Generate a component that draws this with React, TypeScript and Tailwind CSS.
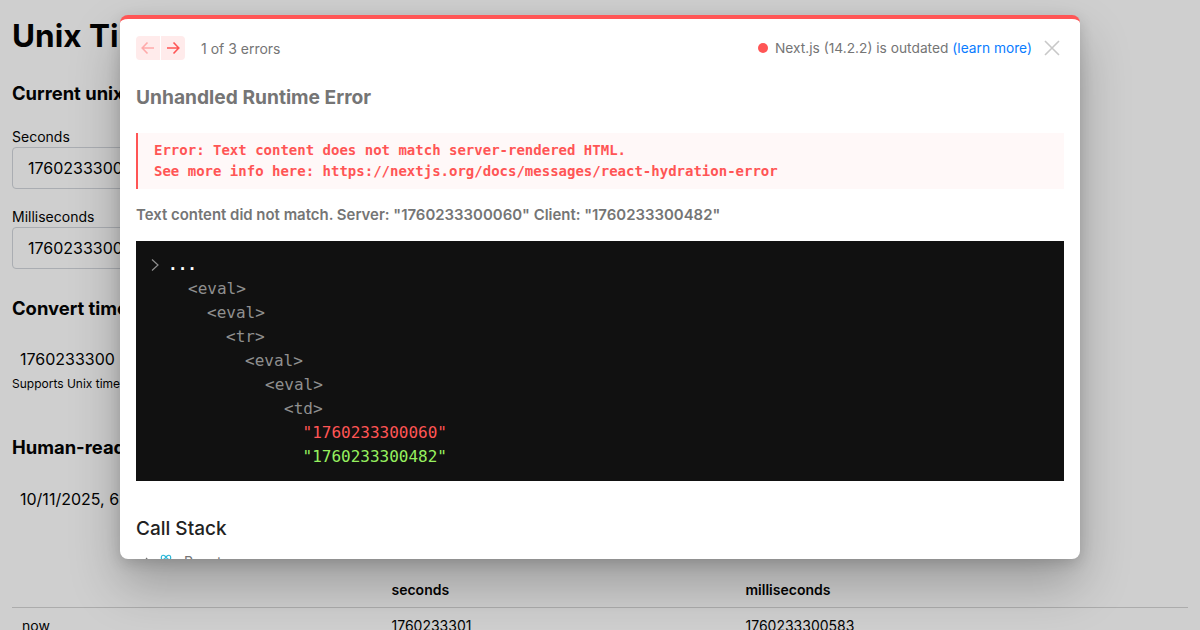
const sans = "font-['Inter',sans-serif]";
const mono = "font-['DejaVu_Sans_Mono','Liberation_Mono',monospace]";

const treeLines = [
  { text: "<eval>", indent: "pl-[52px]", color: "text-[#8f8f8f]" },
  { text: "<eval>", indent: "pl-[71px]", color: "text-[#8f8f8f]" },
  { text: "<tr>", indent: "pl-[90px]", color: "text-[#8f8f8f]" },
  { text: "<eval>", indent: "pl-[109px]", color: "text-[#8f8f8f]" },
  { text: "<eval>", indent: "pl-[129px]", color: "text-[#8f8f8f]" },
  { text: "<td>", indent: "pl-[148px]", color: "text-[#8f8f8f]" },
  { text: '"1760233300060"', indent: "pl-[166.5px]", color: "text-[#ff5555]" },
  { text: '"1760233300482"', indent: "pl-[166.5px]", color: "text-[#96f05f]" },
];

function ArrowLeft({ className }: { className: string }) {
  return (
    <svg viewBox="0 0 14 14" width="14" height="14" fill="none" className={className}>
      <path d="M6.5 1.5 1.2 7l5.3 5.5M1.5 7h11.5" stroke="currentColor" strokeWidth="1.6" />
    </svg>
  );
}

function ArrowRight({ className }: { className: string }) {
  return (
    <svg viewBox="0 0 14 14" width="14" height="14" fill="none" className={className}>
      <path d="M7.5 1.5 12.8 7l-5.3 5.5M12.5 7H1" stroke="currentColor" strokeWidth="1.6" />
    </svg>
  );
}

function ReactMark() {
  return (
    <svg viewBox="0 0 16 16" width="16" height="16" fill="none" stroke="#2eb8d8" strokeWidth="1">
      <ellipse cx="8" cy="8" rx="7.5" ry="3" />
      <ellipse cx="8" cy="8" rx="7.5" ry="3" transform="rotate(60 8 8)" />
      <ellipse cx="8" cy="8" rx="7.5" ry="3" transform="rotate(120 8 8)" />
    </svg>
  );
}

function Page() {
  return (
    <div className="h-[630px] overflow-hidden bg-white px-3 pt-[12px] text-black">
      <h1 className="text-[31.5px] leading-[48px] font-bold whitespace-nowrap">Unix Time Converter</h1>
      <h2 className="mt-[20px] text-[18.4px] leading-[27px] font-bold">Current unix time</h2>
      <label className="mt-[19px] block text-[14px] leading-[21px]">Seconds</label>
      <div className="flex h-[42px] w-[400px] items-center rounded border border-[#d1d5db] px-[15px] text-[16px]">
        1760233300
      </div>
      <label className="mt-[17px] block text-[14px] leading-[21px]">Milliseconds</label>
      <div className="flex h-[42px] w-[400px] items-center rounded border border-[#d1d5db] px-[15px] text-[16px]">
        1760233300482
      </div>
      <h2 className="mt-[26px] text-[18.4px] leading-[27px] font-bold">Convert time</h2>
      <div className="mt-[25px] pl-2 text-[16px] leading-[24px]">1760233300</div>
      <p className="mt-[4px] text-[12px] leading-[18px] whitespace-nowrap">Supports Unix timestamps in seconds</p>
      <h2 className="mt-[41px] text-[18.4px] leading-[27px] font-bold">Human-readable time</h2>
      <div className="mt-[26px] pl-2 text-[16px] leading-[24px]">10/11/2025, 6:35:00 PM</div>
      <div className="mt-[68px] grid grid-cols-[379.5px_354px_1fr] border-b border-[#d4d4d4] text-[14px] leading-[21px] font-semibold">
        <div />
        <div className="pb-[7px]">seconds</div>
        <div className="pb-[7px]">milliseconds</div>
      </div>
      <div className="grid grid-cols-[379.5px_354px_1fr] pt-[7px] text-[14px] leading-[21px]">
        <div className="pl-[10px]">now</div>
        <div>1760233301</div>
        <div>1760233300583</div>
      </div>
    </div>
  );
}

export default function App() {
  return (
    <div className={`relative h-[630px] w-[1200px] overflow-hidden ${sans}`}>
      <Page />
      <div className="absolute inset-0 flex justify-center bg-[#111111]/20 pt-[15px]">
        <div className="flex h-[544px] w-[960px] flex-col overflow-hidden rounded-lg border-t-[4px] border-[#ff5555] bg-white px-4 shadow-[0_25px_50px_rgba(0,0,0,0.25),0_4px_14px_rgba(0,0,0,0.15)]">
          <div className="mt-[17px] flex h-6 shrink-0 items-center justify-between">
            <div className="flex items-center">
              <div className="flex h-6 gap-px">
                <div className="flex w-6 items-center justify-center rounded-l bg-[#ffebeb]">
                  <ArrowLeft className="text-[#ffaaaa]" />
                </div>
                <div className="flex w-6 items-center justify-center rounded-r bg-[#ffebeb]">
                  <ArrowRight className="text-[#ff5555]" />
                </div>
              </div>
              <span className="ml-4 text-[14px] text-[#757575]">1 of 3 errors</span>
            </div>
            <div className="flex items-center">
              <span className="h-2.5 w-2.5 rounded-full bg-[#ff5555]" />
              <span className="ml-[7px] text-[13.76px] whitespace-pre text-[#757575]">
                Next.js (14.2.2) is outdated <span className="text-[#0a7cff]">(learn more)</span>
              </span>
              <svg viewBox="0 0 16 16" width="16" height="16" fill="none" className="mr-[4px] ml-3 text-[#c8c8c8]">
                <path d="M1 1l14 14M15 1 1 15" stroke="currentColor" strokeWidth="1.6" />
              </svg>
            </div>
          </div>

          <h1 className="mt-[22px] shrink-0 text-[19.2px] leading-[30px] font-bold text-[#757575]">Unhandled Runtime Error</h1>

          <div className="mt-[21px] shrink-0 border-l-2 border-[#ff5555] bg-[#fff8f8] py-[7px] pl-4">
            <p className={`${mono} text-[14px] leading-[21px] font-bold whitespace-pre text-[#ff5555]`}>
              Error: Text content does not match server-rendered HTML.{"\n"}See more info here: https://nextjs.org/docs/messages/react-hydration-error
            </p>
          </div>

          <p className="mt-[16px] shrink-0 text-[14.95px] leading-[21px] font-semibold text-[#757575]">
            Text content did not match. Server: "1760233300060" Client: "1760233300482"
          </p>

          <div className={`mt-[15px] h-[240px] shrink-0 bg-[#111111] pt-[12px] ${mono} text-[16px] leading-[24px] whitespace-pre`}>
            <div className="flex items-center pl-[14px] text-white">
              <svg viewBox="0 0 10 14" width="10" height="14" fill="none" className="text-[#8f8f8f]">
                <path d="M2 1.5 8 7l-6 5.5" stroke="currentColor" strokeWidth="1.2" />
              </svg>
              <span className="ml-[8px] font-bold">...</span>
            </div>
            {treeLines.map((line, i) => (
              <div key={i} className={`${line.indent} ${line.color}`}>
                {line.text}
              </div>
            ))}
          </div>

          <h2 className="mt-[33px] shrink-0 text-[19px] leading-[30px] font-medium text-[#222222]">Call Stack</h2>
          <div className="mt-[6px] flex shrink-0 items-center pl-[7px] text-[14px] leading-[24px] text-[#757575]">
            <svg viewBox="0 0 10 10" width="10" height="10" className="text-[#757575]">
              <path d="M3 1l4 4-4 4" stroke="currentColor" strokeWidth="1.2" fill="none" />
            </svg>
            <span className="ml-[5px]">
              <ReactMark />
            </span>
            <span className="ml-[10px]">React</span>
          </div>
        </div>
      </div>
    </div>
  );
}
